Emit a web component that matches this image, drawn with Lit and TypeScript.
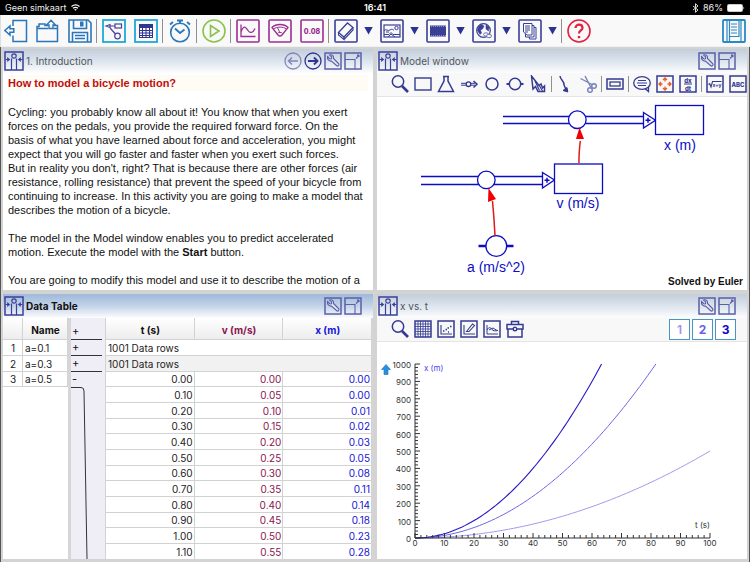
import { LitElement, html, svg, css, TemplateResult, SVGTemplateResult } from "lit";
import { customElement, property } from "lit/decorators.js";

type Glyph = SVGTemplateResult;

/* 24-unit glyphs of the main toolbar */
const frame24 = svg`<rect x="1" y="1" width="22" height="22" rx="1" stroke-width="1.6"/>`;
const MAIN: Record<string, Glyph> = {
  exit: svg`<path d="M9 7V1.5H22.5V22.5H9V16.5" stroke-width="1.5"/><path d="M0.8 11.5L6 7v2.8h3.8v3.5H6V16z" stroke-width="1.5"/>`,
  open: svg`<path d="M12 6.500H9V5H3v2.500H1V22.500H21.500V6.500H18M1 9.500H12M17.500 9.500h4" stroke-width="1.5"/><path d="M15 1.300L19.500 6h-2.500v3.500h-4V6h-2.500z" stroke-width="1.4"/>`,
  save: svg`<path d="M1 1H20L23 4V23H1zM5.500 1V9.500H18.500V1M4.500 23V13.500H19.500V23M7 16.500H17M7 19.500H17" stroke-width="1.6"/><rect x="12.5" y="3" width="2.5" height="4" fill="currentColor"/>`,
  model: svg`<rect x="1" y="1" width="22" height="22" stroke="#1fa9d8" stroke-width="1.8"/><g stroke="#4a3f9c" stroke-width="1.2"><path d="M4 7l4-1.500v3zM8 7h5M8 9l5.500 6"/><rect x="13" y="5" width="6.500" height="4"/><circle cx="15.5" cy="17" r="2.8"/></g>`,
  table: svg`<rect x="1" y="1" width="22" height="22" stroke="#1fa9d8" stroke-width="1.8"/><g stroke="#2f3591" stroke-width="1"><rect x="5.5" y="5.5" width="13" height="13"/><path d="M6 7.500H18" stroke-width="3"/><path d="M5.500 11.500h13M5.500 14h13M5.500 16.500h13M8.500 8v10.500M12 8v10.500M15.500 8v10.500"/></g>`,
  watch: svg`<circle cx="12" cy="13.5" r="9.3" stroke-width="1.6"/><path d="M9 1.500h6M12 1.500V4M7 9.500l5 4.500 4.500-3.500M2 5.500L5 3M19 3l3 2.500" stroke-width="1.8"/>`,
  play: svg`<circle cx="12" cy="12" r="11" stroke-width="1.6"/><path d="M8.500 6.500L17 12L8.500 17.500z" stroke-width="1.6"/>`,
  graph: svg`${frame24}<path d="M5 5.500V17.500H19.500M5 13C8 5 10 8.500 12 11.500S17 14 19 9.500" stroke-width="1.3"/>`,
  meter: svg`${frame24}<path d="M4 8.500C8 4.500 16 4.500 20 8.500L14 16C12.500 17.500 11.500 17.500 10 16z" stroke-width="1.3"/><path d="M5.500 10C9 7.500 15 7.500 18.500 10M11.500 13L9.500 8.500M9.500 14.500C10.500 13 13.500 13 14.500 14.500" stroke-width="1"/>`,
  value: svg`${frame24}<text class="num" x="12" y="15" text-anchor="middle">0.08</text>`,
  eraser: svg`${frame24}<path d="M4.500 13.500L13.500 4l5.500 4.500L10 18z" stroke-width="1.3"/><path d="M4.500 13.500v2.500L10 20.500V18M10 20.500L19 11V8.500" stroke-width="1.1"/>`,
  image: svg`${frame24}<rect x="4" y="6" width="16" height="12" stroke-width="1.2"/><path d="M4 11.500c2-2 4 1 6-.500s3-.500 4 .500M4 15.500h5l2-2 2 2h7M8 18l3-3 4 3M6 13h3" stroke-width="1"/><circle cx="16.5" cy="9" r="1.7" stroke-width="1"/>`,
  film: svg`${frame24}<rect x="4.5" y="7" width="15" height="10" fill="currentColor"/><path d="M5 7.500H20M5 16.500H20" stroke="#8f95cc" stroke-width="1" stroke-dasharray="1 1"/>`,
  globe: svg`${frame24}<circle cx="11.5" cy="11.5" r="6.8" stroke-width="1.2"/><path d="M6.500 7.500l3-2 2.500 1.500-1.500 3-2 1 1 3-1.500 1.500-2.500-4zM14 6l3 2-.500 4-2.500-2z" fill="currentColor" stroke-width=".6"/><g fill="#f9f9f9" stroke="#6f74b4" stroke-width="1"><ellipse cx="14" cy="15.5" rx="2.5" ry="1.7"/><ellipse cx="17" cy="17" rx="2.5" ry="1.7"/></g>`,
  docs: svg`${frame24}<g fill="#fff" stroke-width="1"><path d="M9.500 8.500h8.500V20h-6.500z"/><path d="M7.500 6.500h8.500V18h-8.500z"/><path d="M5.500 4.500h8.500V16H9L5.500 13z"/><path d="M7 7h5M7 9h5M7 11h5M7 13h3"/></g>`,
  help: svg`<circle cx="12" cy="12" r="11" stroke-width="1.6"/><path d="M8.500 9C8.500 4.500 15.500 4.500 15.500 9C15.500 11.500 12 11.500 12 14.500" stroke-width="2.2"/><path d="M12 17v2.200" stroke-width="2.4"/>`,
  notes: svg`<rect x="1" y="1" width="22" height="22" rx="1" stroke-width="1.8"/><path d="M5 1V22M19 1V22M7.500 2V17.500H17V2M7.500 17.500v4.500" stroke-width="1.2"/><path d="M9 5h6M9 8h6M9 11h6M9 14h6" stroke-width="1"/>`,
};

/* 18-unit glyphs of the pane tools */
const frame18 = svg`<rect x="1" y="1" width="16" height="16" stroke-width="1.5"/>`;
const SMALL: Record<string, Glyph> = {
  prev: svg`<circle cx="9" cy="9" r="8" stroke-width="1.3"/><path d="M14 9H4.500M8 5.500L4.500 9L8 12.500" stroke-width="1.5"/>`,
  next: svg`<circle cx="9" cy="9" r="8" stroke-width="1.3"/><path d="M4 9h9.500M10 5.500L13.500 9L10 12.500" stroke-width="1.9"/>`,
  wrench: svg`${frame18}<path d="M3.500 4.500L6 7l1.500-.3.300-1.700L5.500 3C8 2 10 4 9.500 6.500L14.500 11.500c1.500 1.500-.5 3.500-2 2L7.500 9C5 9.500 3 7 3.500 4.500z" fill="#e3e6f2" stroke-width="1.1"/>`,
  resize: svg`${frame18}<path d="M1 7.500H11V17" stroke-width="1.1"/><path d="M12 6.500L15 3.500" stroke-width="1.2"/><path d="M13 3h2V5z" fill="currentColor" stroke-width="1"/>`,
  zoom: svg`<circle cx="7" cy="6.5" r="5.7" stroke-width="1.5"/><path d="M11 11L17 17" stroke-width="2.6"/>`,
  rect: svg`<rect x="1" y="3" width="16" height="12" stroke-width="1.4"/>`,
  flask: svg`<path d="M6 1.500h6M7 1.500V6L1.500 16.500H16.500L11 6V1.500" stroke-width="1.5"/>`,
  flow: svg`<path d="M1 8.300H6M1 10.200H6M10.500 8.300H15M10.500 10.200H15" stroke-width="1"/><circle cx="8.5" cy="9.2" r="2.3" stroke-width="1.3"/><path d="M13.500 6L17 9.200L13.500 12.500" stroke-width="1.5"/>`,
  circle: svg`<circle cx="9" cy="9" r="6" stroke-width="1.5"/>`,
  constant: svg`<circle cx="9" cy="9" r="5.7" stroke-width="1.5"/><path d="M0.500 9H3.300M14.700 9h2.800" stroke-width="2"/>`,
  event: svg`<path d="M2.500 1L4 14l2.500-2.500L9 16.500h6.500V11l-2 2-1.500-4-2 1.500z" stroke-width="1.5"/><path d="M6 6l4.500 9.500M10 10l3.500 6" stroke-width="1.2"/>`,
  relation: svg`<path d="M4 1C4.500 5.500 8.500 6 8 10L10 14.500" stroke-width="1.5"/><path d="M7 15.500l4-3 .8 4.500z" fill="currentColor" stroke-width="1"/>`,
  cut: svg`<g stroke="#7a80bb" stroke-width="1.4"><path d="M6 1L12 12.500M1.500 3.500L14 10"/><circle cx="15" cy="11" r="2.3"/><circle cx="11" cy="15" r="2.3"/></g>`,
  frame: svg`<rect x="1" y="4" width="16" height="10" stroke-width="1.5"/><rect x="4" y="7" width="10" height="4" stroke-width="1.3"/>`,
  speech: svg`<ellipse cx="9" cy="8" rx="8.3" ry="6.3" stroke-width="1.3"/><path d="M12 13.500l3.500 3V12" stroke-width="1.3"/><path d="M5 5.500h8M4 8h10M5 10.500h8" stroke-width="1"/>`,
  move: svg`${frame18}<g stroke="#ee5a24" fill="none" stroke-width="1.3"><path d="M7 5l2-2 2 2M9 3v3.500M7 13l2 2 2-2M9 15v-3.500M5 7L3 9l2 2M3 9h3.500M13 7l2 2-2 2M15 9h-3.500"/></g>`,
  dxdt: svg`${frame18}<text class="tiny" x="9" y="7.500" text-anchor="middle">dx</text><path d="M5 9h8" stroke-width="1"/><text class="tiny" x="9" y="15.500" text-anchor="middle">dt</text>`,
  formula: svg`${frame18}<path d="M2.500 9.500l1.200-.8L5 12 6.500 6.500H15.500" stroke-width="1.1"/><text class="micro" x="11" y="12" text-anchor="middle">x+y</text>`,
  abc: svg`${frame18}<text class="abc" x="9" y="11.5" text-anchor="middle">ABC</text>`,
  grid: svg`${frame18}<path d="M4 1V17M6.500 1V17M9 1V17M11.500 1V17M14 1V17M1 4H17M1 6.500H17M1 9H17M1 11.500H17M1 14H17" stroke-width=".8"/>`,
  scatter: svg`${frame18}<path d="M4 5V14H15" stroke-width="1.1"/><path d="M6 11h1.500M8.500 9.500H10M10.500 8H12M13 6.500h1.500M11 12h1" stroke-width="1.3"/>`,
  sketch: svg`${frame18}<path d="M4 5V14H15M6.500 11.500L12.500 4l2 1.500L9 11.500z" stroke-width="1.1"/>`,
  fit: svg`${frame18}<path d="M4 5V14H15M4 10c2-4 4-2 5-.5s3 1.500 6 1M6 10l4-2 4 2.500" stroke-width="1"/>`,
  toolbox: svg`<path d="M5.500 4V1.500h7V4M1 4.500h16V9H1zM2 9v8h14V9" stroke-width="1.5"/><circle cx="9" cy="9" r="1.8" fill="#fff" stroke-width="1.4"/>`,
};

const PIN = svg`<rect x="1" y="1" width="18" height="18" stroke-width="1.5"/><path d="M7.500 19V7.500M12.500 19V7.500M1.500 8.500H5M15 8.500h3.500" stroke-width="1.2"/><circle cx="10" cy="5" r="2.2" stroke-width="1.2"/><path d="M3.200 6L6.200 8.500L3.200 11zM16.800 6L13.800 8.500L16.800 11z" fill="currentColor" stroke="none"/>`;

const iconCss = css`
  * { box-sizing: border-box; }
  button {
    display: block; flex: none; margin: 0; padding: 0; border: 0;
    background: none; color: inherit; font: inherit; cursor: pointer;
  }
  svg { display: block; fill: none; stroke: currentColor; }
  text { stroke: none; fill: currentColor; font-family: Inter, sans-serif; }
  .sep { flex: none; width: 1px; background: #909090; }
`;

const tool = (name: string, label: string): TemplateResult => html`
  <button aria-label=${label}><svg width="18" height="18" viewBox="0 0 18 18">${SMALL[name]}</svg></button>`;

@customElement("status-bar")
class StatusBar extends LitElement {
  static styles = css`
    :host {
      display: grid; grid-template-columns: 1fr auto 1fr; align-items: center;
      height: 15px; padding: 0 5px; background: #000; color: #eee;
      font: 9px/15px Inter, sans-serif;
    }
    .side { display: flex; align-items: center; gap: 5px; }
    .end { justify-content: flex-end; gap: 4px; }
    .time { font-weight: 600; color: #fff; }
    svg { display: block; }
  `;
  render() {
    return html`
      <span class="side">Geen simkaart
        <svg width="9" height="7" viewBox="0 0 9 7" fill="none" stroke="#fff" stroke-width="1.2">
          <path d="M.5 2.500Q4.500-.800 8.500 2.500M2 4.300Q4.500 2.400 7 4.300"/><path d="M4.500 6.800L3.200 5.400Q4.500 4.600 5.800 5.400z" fill="#fff" stroke="none"/>
        </svg></span>
      <span class="time">16:41</span>
      <span class="side end">
        <svg width="7" height="10" viewBox="0 0 7 10" fill="none" stroke="#ddd" stroke-width="1"><path d="M1 3L6 7L3.500 9.300V.700L6 3L1 7"/></svg>
        86%
        <svg width="18" height="8" viewBox="0 0 18 8"><rect x=".5" y=".5" width="15" height="7" rx="1" fill="none" stroke="#ccc"/><rect x="1" y="1" width="14" height="6" fill="#fff"/><path d="M16.500 2.500q1.500 1.500 0 3z" fill="#fff"/></svg>
      </span>`;
  }
}

@customElement("main-toolbar")
class MainToolbar extends LitElement {
  static styles = [iconCss, css`
    :host {
      display: flex; align-items: center; height: 32px; padding: 0 4px 0 3px;
      background: #f9f9f9; border-left: 1px solid #ddd; border-bottom: 1px solid #f0f0f0;
      box-sizing: border-box;
    }
    .group { display: flex; align-items: center; gap: 8px; }
    .sep { height: 24px; margin: 0 5px 0 4px; }
    .blue { color: #2a76b8; }
    .green { color: #8bc34a; }
    .purple { color: #9b2f92; }
    .indigo { color: #3a3f96; }
    .red { color: #e0213f; }
    .sky { color: #2a88c4; margin-left: auto; }
    .menus { gap: 7px; }
    .menu { display: flex; align-items: center; gap: 6px; }
    .caret { width: 9px; height: 8px; background: #2b3390; clip-path: polygon(0 0, 100% 0, 50% 100%); }
    .num { font-size: 7px; font-weight: 800; }
  `];
  private icon(name: string, label: string) {
    return html`<button aria-label=${label}><svg width="24" height="24" viewBox="0 0 24 24">${MAIN[name]}</svg></button>`;
  }
  private menu(name: string, label: string) {
    return html`<span class="menu">${this.icon(name, label)}<button class="caret" aria-label="${label} options"></button></span>`;
  }
  render() {
    const sep = html`<span class="sep"></span>`;
    return html`
      <div class="group blue">${this.icon("exit", "Exit")}${this.icon("open", "Open")}${this.icon("save", "Save")}</div>${sep}
      <div class="group">${this.icon("model", "Model")}${this.icon("table", "Table")}</div>${sep}
      <div class="group blue">${this.icon("watch", "Timer")}</div>${sep}
      <div class="group green">${this.icon("play", "Start")}</div>${sep}
      <div class="group purple">${this.icon("graph", "Graph")}${this.icon("meter", "Meter")}${this.icon("value", "Value")}</div>${sep}
      <div class="group menus indigo">
        ${this.menu("eraser", "Text")}${this.menu("image", "Image")}${this.menu("film", "Video")}${this.menu("globe", "Web")}${this.menu("docs", "Documents")}
      </div>${sep}
      <div class="group red">${this.icon("help", "Help")}</div>
      <div class="group sky">${this.icon("notes", "Notes")}</div>`;
  }
}

@customElement("app-pane")
class AppPane extends LitElement {
  @property() heading = "";
  @property({ type: Boolean }) active = false;
  @property({ type: Boolean }) pager = false;
  static styles = [iconCss, css`
    :host { display: flex; flex-direction: column; min-width: 0; min-height: 0; overflow: hidden; background: #fff; }
    header {
      display: flex; flex: none; align-items: center; gap: 2px; height: 24px; padding: 0 11px 0 1px;
      background: linear-gradient(#c3cedb, #dce4ed 50%, #fdfdfe); color: #3a3f9a;
    }
    .active { background: linear-gradient(#9fb9d9, #c3d3e8 50%, #fdfdfe); }
    h2 { flex: 1; margin: 0; font: 10px/14px Inter, sans-serif; color: #50565c; white-space: nowrap; }
    .active h2 { color: #111; font-weight: 700; }
    .tools { display: flex; gap: 2px; color: #5a60a8; }
    .dim { opacity: .7; }
    .strong { color: #2f3591; }
    .body { flex: 1; display: flex; flex-direction: column; min-height: 0; overflow: hidden; }
  `];
  render() {
    return html`
      <header class=${this.active ? "active" : ""}>
        <button aria-label="Arrange"><svg width="20" height="20" viewBox="0 0 20 20">${PIN}</svg></button>
        <h2>${this.heading}</h2>
        <div class="tools">
          ${this.pager ? html`<span class="dim">${tool("prev", "Previous")}</span><span class="strong">${tool("next", "Next")}</span>` : ""}
          ${tool("wrench", "Tools")}${tool("resize", "Resize")}
        </div>
      </header>
      <div class="body"><slot></slot></div>`;
  }
}

@customElement("intro-text")
class IntroText extends LitElement {
  static styles = css`
    :host {
      display: block; padding: 2px 5px 0; color: #111; white-space: nowrap;
      font: 11px/14px "Liberation Sans", Arial, sans-serif;
    }
    h1 { margin: 0 0 14px; font-size: 11px; line-height: 16px; color: #c00d0d; background: #fffcf6; }
    p { margin: 0 0 14px; }
  `;
  render() {
    return html`
      <h1>How to model a bicycle motion?</h1>
      <p>Cycling: you probably know all about it! You know that when you exert<br>forces on the pedals, you provide the required forward force. On the<br>basis of what you have learned about force and acceleration, you might<br>expect that you will go faster and faster when you exert such forces.<br>But in reality you don't, right? That is because there are other forces (air<br>resistance, rolling resistance) that prevent the speed of your bicycle from<br>continuing to increase. In this activity you are going to make a model that<br>describes the motion of a bicycle.</p>
      <p>The model in the Model window enables you to predict accelerated<br>motion. Execute the model with the <b>Start</b> button.</p>
      <p>You are going to modify this model and use it to describe the motion of a</p>`;
  }
}

const stripCss = css`
  .strip {
    display: flex; flex: none; align-items: center; gap: 5px; height: 24px; padding: 0 11px 1px 14px;
    background: #f8f8f8; border-bottom: 1px solid #e4e4e4; color: #343a92; overflow: hidden;
  }
`;

@customElement("model-view")
class ModelView extends LitElement {
  static styles = [iconCss, stripCss, css`
    :host { display: flex; flex-direction: column; flex: 1; min-height: 0; }
    .strip { padding-right: 0; }
    .sep { height: 16px; margin: 0 -1px; }
    .tiny { font-size: 6px; font-weight: 800; }
    .micro { font-size: 5px; font-weight: 700; }
    .abc { font-size: 6px; font-weight: 800; }
    .canvas { flex: 1; width: 100%; min-height: 0; color: #0c0cc4; stroke-width: 1.3; }
    .canvas text { font: 14px "Liberation Sans", Arial, sans-serif; }
    .canvas .note { font-size: 10px; font-weight: 700; fill: #111; }
    .link { stroke: #e01818; }
    .head { fill: #f00000; stroke: none; }
    .node { fill: #fff; }
  `];
  render() {
    const sep = html`<span class="sep"></span>`;
    return html`
      <div class="strip">
        ${tool("zoom", "Zoom")}${tool("rect", "State variable")}${tool("flask", "Quantity")}${tool("flow", "Flow")}${tool("circle", "Auxiliary")}${tool("constant", "Constant")}${tool("event", "Event")}${sep}
        ${tool("relation", "Relation")}${tool("cut", "Cut")}${sep}
        ${tool("frame", "Frame")}${sep}
        ${tool("speech", "Comment")}${tool("move", "Fit")}${tool("dxdt", "Equations")}${sep}
        ${tool("formula", "Formula")}${tool("abc", "Text")}
      </div>
      <svg class="canvas" viewBox="0 0 370 193" preserveAspectRatio="xMidYMid meet">
        <path d="M126 19.500H266M126 26.500H266M44 79.500H165.500M44 87.500H165.500"/>
        <g class="node">
          <circle cx="200.3" cy="22.7" r="8.8"/><circle cx="109.3" cy="82.9" r="8.8"/><circle cx="119.3" cy="149" r="10.4"/>
          <path d="M266.500 15.500L278.500 23.200L266.500 31z"/><path d="M165.500 75.500L177.500 83L165.500 91z"/>
          <rect x="278.5" y="8.5" width="48" height="29"/><rect x="177.5" y="67" width="48" height="29.5"/>
        </g>
        <path d="M268.500 23.200h5M271 20.700v5M167.500 83.200h5M170 80.700v5" stroke-width="1.5"/>
        <path d="M101.500 149H109M129.500 149h7" stroke-width="2.6"/>
        <path class="link" d="M202 66Q201.700 58 203.300 44M118 138.500Q117 120 115.500 104" stroke-width="1.500"/>
        <path class="head" d="M199 42H207L202.500 30.500zM111 105l8-3L111.500 91z"/>
        <text x="303" y="53" text-anchor="middle">x (m)</text>
        <text x="201" y="111" text-anchor="middle">v (m/s)</text>
        <text x="119" y="175" text-anchor="middle">a (m/s^2)</text>
        <text class="note" x="366" y="188" text-anchor="end">Solved by Euler</text>
      </svg>`;
  }
}

const ROWS: [string, string, string][] = [
  ["0.00", "0.00", "0.00"], ["0.10", "0.05", "0.00"], ["0.20", "0.10", "0.01"], ["0.30", "0.15", "0.02"],
  ["0.40", "0.20", "0.03"], ["0.50", "0.25", "0.05"], ["0.60", "0.30", "0.08"], ["0.70", "0.35", "0.11"],
  ["0.80", "0.40", "0.14"], ["0.90", "0.45", "0.18"], ["1.00", "0.50", "0.23"], ["1.10", "0.55", "0.28"],
];

@customElement("data-table")
class DataTable extends LitElement {
  static styles = css`
    * { box-sizing: border-box; }
    :host { display: flex; flex: 1; min-height: 0; background: #d6d6d6; font: 10px/14px Inter, sans-serif; color: #222; }
    .runs { flex: none; width: 65px; background: #fff; }
    table { width: 100%; border-collapse: separate; border-spacing: 0; table-layout: fixed; background: #fff; }
    th, td { padding: 0 1px 0 2px; font-size: 10px; border-right: 1px solid #d2d2d2; border-bottom: 1px solid #d2d2d2; white-space: nowrap; overflow: hidden; }
    th { height: 22px; padding-top: 2px; font-weight: 700; color: #111; background: linear-gradient(#fff, #ededed); }
    td { height: 16px; text-align: right; }
    tr:nth-child(3n) td { height: 15px; }
    .runs td:first-child { text-align: center; }
    .runs td { text-align: left; }
    .index { width: 20px; }
    .tree { flex: none; display: flex; flex-direction: column; width: 34px; margin: 0 0 0 3px; background: #efeef6; }
    .tree button {
      display: block; flex: none; width: 31px; height: 16px; padding: 0 0 0 1px; margin: 0; border: 0; border-bottom: 1px solid #333;
      background: none; font: 11px/13px Inter, sans-serif; text-align: left; color: #111;
    }
    .tree .top { height: 22px; padding-top: 6px; }
    .tree .open { border-color: transparent; height: 15px; }
    .tree svg { flex: 1; display: block; width: 34px; min-height: 0; fill: none; stroke: #333; }
    .rows { flex: 1; min-width: 0; margin-right: 1px; overflow: hidden; }
    .rows table { border-left: 1px solid #d2d2d2; }
    .group td { text-align: left; }
    .alt td { background: #f1f1f1; }
    th.v, td.v { color: #8a1450; }
    th.x, td.x { color: #1515d8; }
  `;
  render() {
    return html`
      <div class="runs">
        <table>
          <colgroup><col class="index"><col></colgroup>
          <thead><tr><th></th><th>Name</th></tr></thead>
          <tbody>${["a=0.1", "a=0.3", "a=0.5"].map((n, i) => html`<tr><td>${i + 1}</td><td>${n}</td></tr>`)}</tbody>
        </table>
      </div>
      <div class="tree">
        <button class="top">+</button><button>+</button><button>+</button><button class="open">-</button>
        <svg viewBox="0 0 34 172" preserveAspectRatio="none"><path d="M0 .5H10Q13 .5 13 4L16 172"/></svg>
      </div>
      <div class="rows">
        <table>
          <thead><tr><th>t (s)</th><th class="v">v (m/s)</th><th class="x">x (m)</th></tr></thead>
          <tbody>
            <tr class="group"><td colspan="3">1001 Data rows</td></tr>
            <tr class="group alt"><td colspan="3">1001 Data rows</td></tr>
            ${ROWS.map((r) => html`<tr><td>${r[0]}</td><td class="v">${r[1]}</td><td class="x">${r[2]}</td></tr>`)}
          </tbody>
        </table>
      </div>`;
  }
}

@customElement("plot-view")
class PlotView extends LitElement {
  static styles = [iconCss, stripCss, css`
    :host { display: flex; flex-direction: column; flex: 1; min-height: 0; }
    .pages { display: flex; gap: 2px; margin-left: auto; }
    .pages button { width: 21px; height: 21px; border: 1px solid #4a94c4; background: #fff; font: 700 12px/19px Inter, sans-serif; }
    .pages .one { color: #9c94f0; font-weight: 600; }
    .two { color: #6a60e4; }
    .three { color: #1208c8; }
    .chart { flex: 1; width: 100%; min-height: 0; }
    .axis { stroke: #333; }
    .chart text { font-size: 8px; fill: #333; }
    .chart .unit { fill: #4a3ff0; }
  `];
  render() {
    const X0 = 38, Y0 = 196, XW = 295, YH = 174;
    const px = (t: number) => X0 + (t / 100) * XW;
    const py = (v: number) => Y0 - (v / 1000) * YH;
    const curve = (a: number) => {
      const end = Math.min(100, Math.sqrt(2000 / a));
      return "M" + Array.from({ length: 61 }, (_, i) => {
        const t = (end * i) / 60;
        return `${px(t).toFixed(2)} ${py((a * t * t) / 2).toFixed(2)}`;
      }).join("L");
    };
    const ticks = Array.from({ length: 51 }, (_, i) => {
      const len = i % 5 ? 3 : 5;
      return `M${X0} ${py(i * 20)}h${len}M${px(i * 2)} ${Y0}v${-len}`;
    }).join("");
    const tens = Array.from({ length: 11 }, (_, i) => i);
    return html`
      <div class="strip">
        ${tool("zoom", "Zoom")}${tool("grid", "Grid")}${tool("scatter", "Points")}${tool("sketch", "Sketch")}${tool("fit", "Fit")}${tool("toolbox", "Toolbox")}
        <div class="pages"><button class="one">1</button><button class="two">2</button><button class="three">3</button></div>
      </div>
      <svg class="chart" viewBox="0 0 370 217" preserveAspectRatio="xMidYMid meet">
        <path d="M9 22.500l4.500 5h-2.500v5H7v-5H4.500z" fill="#2b8fe0" stroke="#1c6fb8" stroke-width=".6"/>
        <path d=${curve(0.1)} stroke="#a29af0"/>
        <path d=${curve(0.3)} stroke="#6f66e6"/>
        <path d=${curve(0.5)} stroke="#2416c8" stroke-width="1.1"/>
        <path class="axis" d="M${X0} ${py(1000)}V${Y0}H${px(100)}${ticks}"/>
        ${tens.map((i) => svg`<text x="34" y=${py(i * 100) + 4} text-anchor="end">${i * 100}</text><text x=${px(i * 10)} y="204" text-anchor="middle">${i * 10}</text>`)}
        <text class="unit" x="47" y="29">x (m)</text>
        <text x="333" y="186" text-anchor="end">t (s)</text>
      </svg>`;
  }
}

@customElement("app-root")
class AppRoot extends LitElement {
  static styles = css`
    :host { display: flex; flex-direction: column; height: 100vh; background: #d3d3d3; overflow: hidden; }
    main {
      flex: 1; min-height: 0; display: grid; gap: 4px; padding: 2px 2px 3px;
      grid-template-columns: minmax(0, 1fr) minmax(0, 1fr);
      grid-template-rows: minmax(0, 241fr) minmax(0, 265fr);
      border: solid #555; border-width: 0 1px;
    }
  `;
  render() {
    return html`
      <status-bar></status-bar>
      <main-toolbar></main-toolbar>
      <main>
        <app-pane heading="1. Introduction" pager><intro-text></intro-text></app-pane>
        <app-pane heading="Model window"><model-view></model-view></app-pane>
        <app-pane heading="Data Table" active><data-table></data-table></app-pane>
        <app-pane heading="x vs. t"><plot-view></plot-view></app-pane>
      </main>`;
  }
}
